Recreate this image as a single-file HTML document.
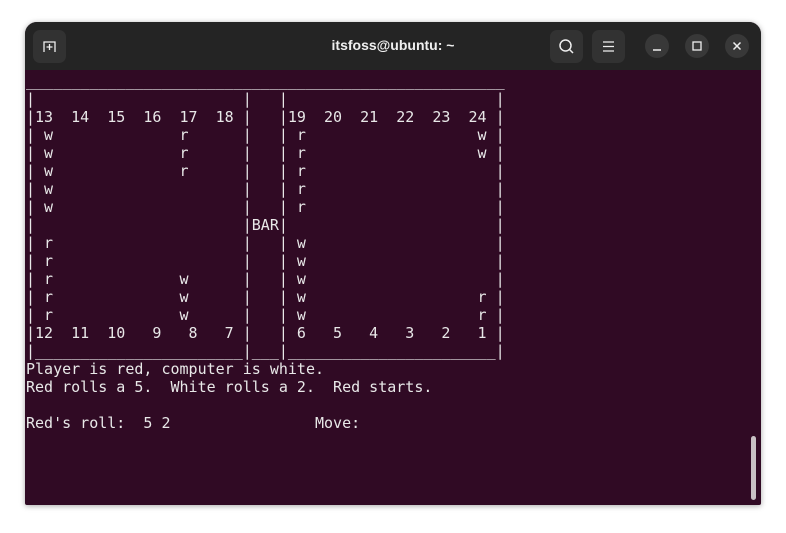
<!DOCTYPE html>
<html><head><style>
body{margin:0;width:786px;height:533px;background:#fff;overflow:hidden;position:relative;font-family:"Liberation Sans",sans-serif}
.win{position:absolute;left:25px;top:22px;width:736px;height:483px;border-radius:12px 12px 2px 2px;overflow:hidden;background:#300a24;box-shadow:0 1px 6px rgba(0,0,0,.35)}
.hd{position:absolute;left:0;top:0;width:736px;height:48px;background:#242424}
.btn{position:absolute;top:8px;width:33px;height:33px;border-radius:7px;background:#323232}
.cir{position:absolute;top:12px;width:24px;height:24px;border-radius:50%;background:#383838}
.title{position:absolute;left:0;width:736px;top:15px;text-align:center;color:#f0f0f0;font-weight:bold;font-size:14px}
pre{position:absolute;left:1px;top:50px;margin:0;font-family:"DejaVu Sans Mono",monospace;font-size:15px;line-height:18px;color:#e8e8e8}
.sb{position:absolute;left:726px;top:414px;width:5px;height:64px;border-radius:3px;background:#c8c0c4}
</style></head><body>
<div class="win">
<div class="hd">
<div class="btn" style="left:8px"><svg width="33" height="33"><path d="M11 22V12h11v10M16.5 14v6M13.5 17h6" stroke="#eee" stroke-width="1.3" fill="none"/></svg></div>
<div class="title">itsfoss@ubuntu: ~</div>
<div class="btn" style="left:525px"><svg width="33" height="33"><circle cx="15.5" cy="15.5" r="5.5" stroke="#eee" stroke-width="1.5" fill="none"/><path d="M19.5 19.5l3.5 3.5" stroke="#eee" stroke-width="1.5"/></svg></div>
<div class="btn" style="left:567px"><svg width="33" height="33"><path d="M11 12h11M11 16.5h11M11 21h11" stroke="#eee" stroke-width="1.3"/></svg></div>
<div class="cir" style="left:620px"><svg width="24" height="24"><path d="M8 16h8" stroke="#eee" stroke-width="1.5"/></svg></div>
<div class="cir" style="left:660px"><svg width="24" height="24"><rect x="8" y="8" width="8" height="8" stroke="#eee" stroke-width="1.3" fill="none"/></svg></div>
<div class="cir" style="left:700px"><svg width="24" height="24"><path d="M8.5 8.5l7 7M15.5 8.5l-7 7" stroke="#eee" stroke-width="1.5"/></svg></div>
</div>
<pre>_____________________________________________________
|                       |   |                       |
|13  14  15  16  17  18 |   |19  20  21  22  23  24 |
| w              r      |   | r                   w |
| w              r      |   | r                   w |
| w              r      |   | r                     |
| w                     |   | r                     |
| w                     |   | r                     |
|                       |BAR|                       |
| r                     |   | w                     |
| r                     |   | w                     |
| r              w      |   | w                     |
| r              w      |   | w                   r |
| r              w      |   | w                   r |
|12  11  10   9   8   7 |   | 6   5   4   3   2   1 |
|_______________________|___|_______________________|
Player is red, computer is white.
Red rolls a 5.  White rolls a 2.  Red starts.

Red's roll:  5 2                Move:</pre>
<div class="sb"></div>
</div>
</body></html>
